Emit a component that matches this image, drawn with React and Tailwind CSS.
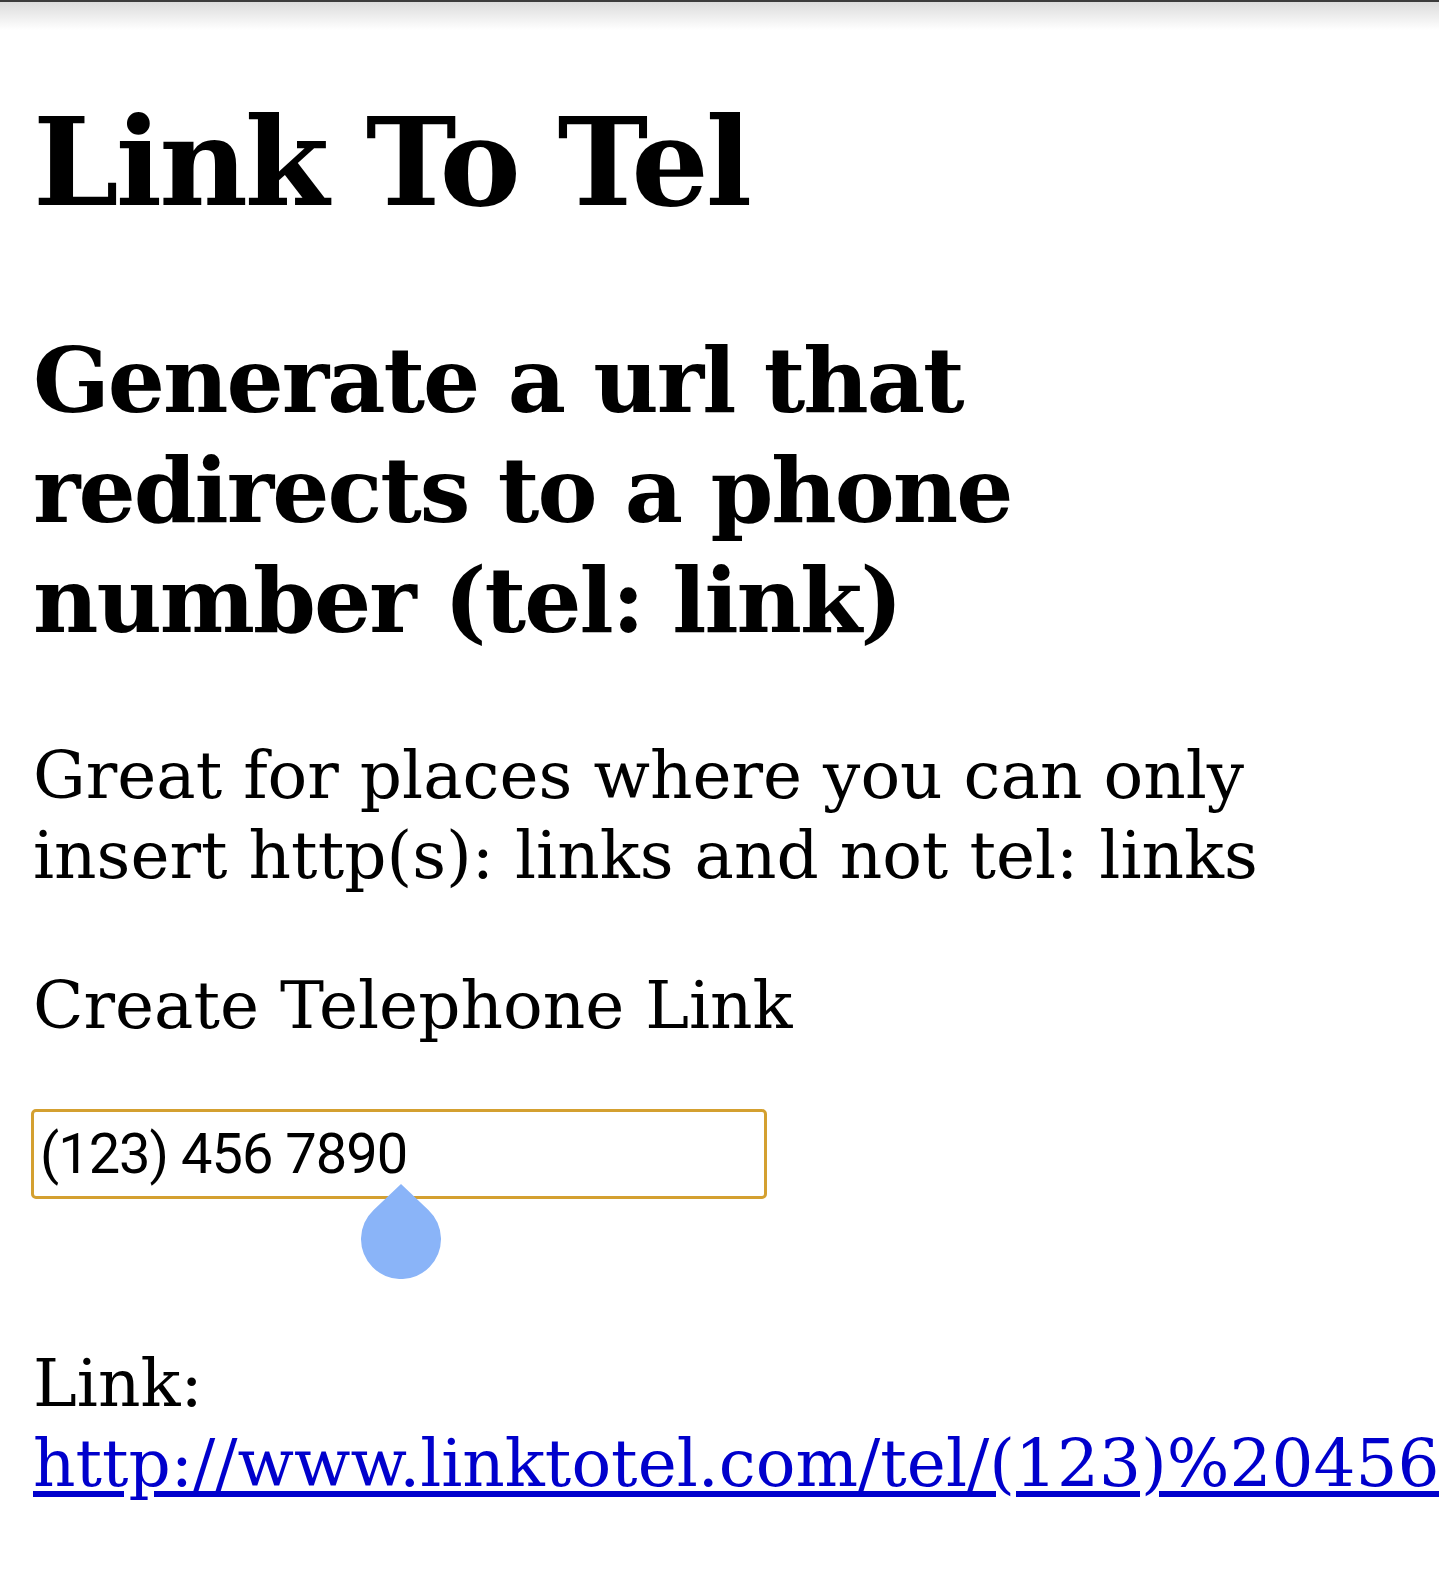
import React from 'react'

// android text-selection handle under the caret
function CursorHandle() {
  return (
    <svg width="80" height="96" viewBox="0 0 80 96" className="absolute left-[328px] top-[74px]">
      <path d="M40 1 L67.4 26.9 A40 40 0 1 1 12.6 26.9 Z" fill="#8ab4f8" />
    </svg>
  )
}

export default function App() {
  const phone = '(123) 456 7890'
  const link = 'http://www.linktotel.com/tel/' + encodeURI(phone)

  return (
    <div className="min-h-[1591px] w-[1439px] overflow-hidden bg-white text-black font-['DejaVu_Serif',serif]">
      {/* status bar shadow */}
      <div className="h-[2px] bg-[#3c3c3c]" />
      <div className="h-[28px] bg-gradient-to-b from-[#dcdcdc] to-white" />

      <div className="px-[33px]">
        <h1 className="mt-[57px] text-[122px] leading-[150px] font-bold tracking-[-3px]">Link To Tel</h1>

        <h2 className="mt-[88px] text-[90px] leading-[110px] font-bold tracking-[-2px] max-w-[1100px]">
          Generate a url that redirects to a phone number (tel: link)
        </h2>

        <p className="mt-[81px] text-[66px] leading-[80px] max-w-[1300px]">
          Great for places where you can only insert http(s): links and not tel: links
        </p>

        <p className="mt-[70px] text-[66px] leading-[80px]">Create Telephone Link</p>

        <div className="relative mt-[63px]">
          <input
            defaultValue={phone}
            className="-ml-[2px] w-[736px] h-[90px] border-[3px] border-[#d4a030] rounded-[5px] px-[6px] text-[56px] tracking-[-1px] font-['Roboto',sans-serif] outline-none"
          />
          <CursorHandle />
        </div>

        <div className="mt-[145px] text-[66px] leading-[80px]">
          <div>Link:</div>
          <a
            href={link}
            className="text-[#0000cc] underline decoration-[length:6px] underline-offset-[5px] whitespace-nowrap"
          >
            {link}
          </a>
        </div>
      </div>
    </div>
  )
}
